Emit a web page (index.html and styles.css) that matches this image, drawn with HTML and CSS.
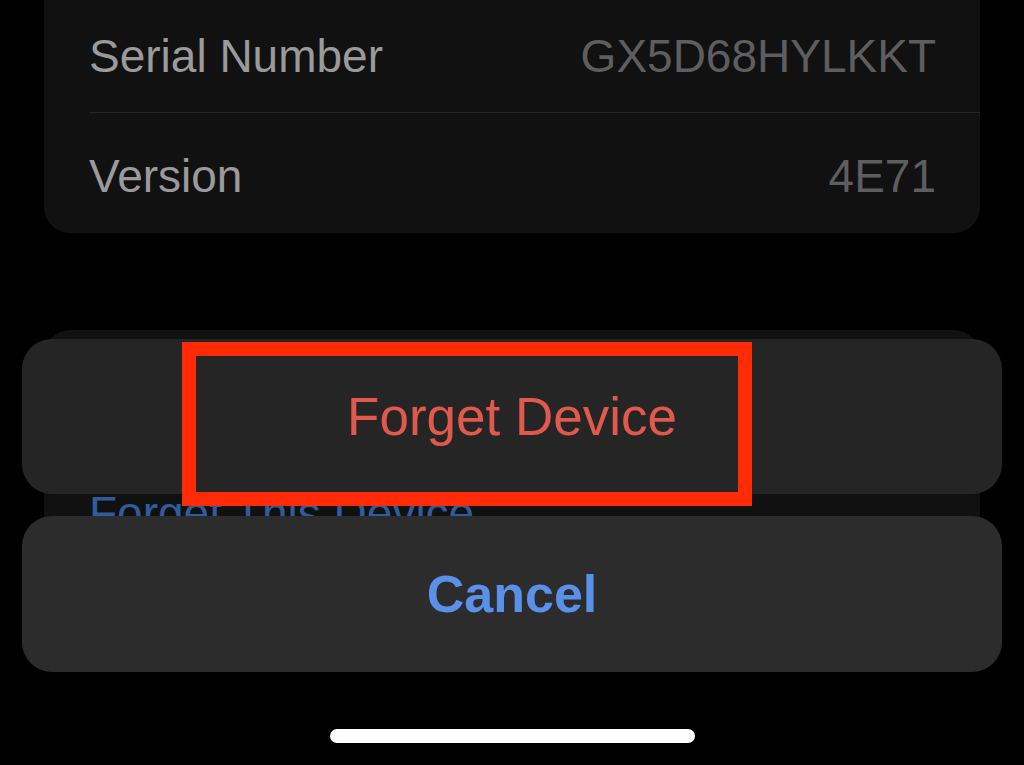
FILE: index.html
```html
<!DOCTYPE html>
<html lang="en">
<head>
<meta charset="utf-8">
<title>Forget Device</title>
<link rel="stylesheet" href="styles.css">
</head>
<body>
<div class="screen">
  <div class="settings">
    <div class="card card-info">
      <div class="row row-first">
        <div class="row-inner with-sep">
          <span class="label">Serial Number</span>
          <span class="value">GX5D68HYLKKT</span>
        </div>
      </div>
      <div class="row row-second">
        <div class="row-inner">
          <span class="label">Version</span>
          <span class="value">4E71</span>
        </div>
      </div>
    </div>
    <div class="card card-forget">
      <div class="row">
        <span class="link">Forget This Device</span>
      </div>
    </div>
  </div>

  <div class="sheet">
    <div class="sheet-btn btn-destructive">Forget Device</div>
    <div class="sheet-btn btn-cancel">Cancel</div>
  </div>

  <div class="highlight"></div>
  <div class="home-indicator"></div>
</div>
</body>
</html>
```

FILE: styles.css
```css
html, body {
  margin: 0;
  padding: 0;
  background: #000;
}

.screen {
  position: relative;
  width: 1024px;
  height: 765px;
  overflow: hidden;
  background: #000;
  font-family: "Liberation Sans", Arial, sans-serif;
}

.settings {
  display: flex;
  flex-direction: column;
}

.card {
  margin: 0 44px;
  background: #111111;
}

.card-info {
  border-radius: 0 0 26px 26px;
  height: 233px;
}

.row {
  padding-left: 45px;
}

.row-inner {
  display: flex;
  justify-content: space-between;
  align-items: center;
  padding-right: 44px;
  font-size: 46px;
}

.row-first .row-inner {
  height: 112px;
}

.with-sep {
  border-bottom: 1px solid #262626;
}

.row-second .row-inner {
  height: 114px;
  padding-top: 6px;
}

.label {
  color: #9a9a9c;
}

.value {
  color: #5e5e60;
}

.card-forget {
  margin-top: 97px;
  height: 154px;
  border-radius: 26px;
  padding-top: 156px;
  overflow: hidden;
}

.link {
  font-size: 46px;
  color: #2e5c9c;
}

.sheet {
  position: absolute;
  left: 22px;
  right: 22px;
  top: 339px;
  display: flex;
  flex-direction: column;
  gap: 22px;
}

.sheet-btn {
  display: flex;
  align-items: center;
  justify-content: center;
  border-radius: 30px;
}

.btn-destructive {
  height: 155px;
  background: #252526;
  color: #e0594c;
  font-size: 53px;
}

.btn-cancel {
  height: 156px;
  background: #2c2c2d;
  color: #5b90e8;
  font-size: 52px;
  font-weight: bold;
}

.highlight {
  position: absolute;
  left: 182px;
  top: 342px;
  width: 542px;
  height: 136px;
  border: 14px solid #ff2a06;
}

.home-indicator {
  position: absolute;
  left: 330px;
  top: 729px;
  width: 365px;
  height: 14px;
  border-radius: 7px;
  background: #ffffff;
}
```
